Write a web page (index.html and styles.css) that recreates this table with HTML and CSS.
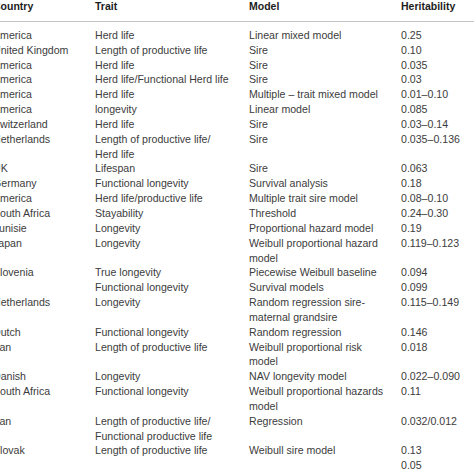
FILE: index.html
```html
<!DOCTYPE html>
<html>
<head>
<meta charset="utf-8">
<link rel="stylesheet" href="styles.css">
</head>
<body>
<table class="tbl">
  <colgroup>
    <col class="c-country"><col class="c-trait"><col class="c-model"><col class="c-her">
  </colgroup>
  <thead>
    <tr><th>Country</th><th>Trait</th><th>Model</th><th>Heritability</th></tr>
  </thead>
  <tbody>
    <tr class="first"><td>America</td><td>Herd life</td><td>Linear mixed model</td><td>0.25</td></tr>
    <tr><td>United Kingdom</td><td>Length of productive life</td><td>Sire</td><td>0.10</td></tr>
    <tr><td>America</td><td>Herd life</td><td>Sire</td><td>0.035</td></tr>
    <tr><td>America</td><td>Herd life/Functional Herd life</td><td>Sire</td><td>0.03</td></tr>
    <tr><td>America</td><td>Herd life</td><td>Multiple – trait mixed model</td><td>0.01–0.10</td></tr>
    <tr><td>America</td><td>longevity</td><td>Linear model</td><td>0.085</td></tr>
    <tr><td>Switzerland</td><td>Herd life</td><td>Sire</td><td>0.03–0.14</td></tr>
    <tr><td>Netherlands</td><td>Length of productive life/<br>Herd life</td><td>Sire</td><td>0.035–0.136</td></tr>
    <tr><td>UK</td><td>Lifespan</td><td>Sire</td><td>0.063</td></tr>
    <tr><td>Germany</td><td>Functional longevity</td><td>Survival analysis</td><td>0.18</td></tr>
    <tr><td>America</td><td>Herd life/productive life</td><td>Multiple trait sire model</td><td>0.08–0.10</td></tr>
    <tr><td>South Africa</td><td>Stayability</td><td>Threshold</td><td>0.24–0.30</td></tr>
    <tr><td>Tunisie</td><td>Longevity</td><td>Proportional hazard model</td><td>0.19</td></tr>
    <tr><td>Japan</td><td>Longevity</td><td>Weibull proportional hazard<br>model</td><td>0.119–0.123</td></tr>
    <tr><td>Slovenia</td><td>True longevity</td><td>Piecewise Weibull baseline</td><td>0.094</td></tr>
    <tr><td></td><td>Functional longevity</td><td>Survival models</td><td>0.099</td></tr>
    <tr><td>Netherlands</td><td>Longevity</td><td>Random regression sire-<br>maternal grandsire</td><td>0.115–0.149</td></tr>
    <tr><td>Dutch</td><td>Functional longevity</td><td>Random regression</td><td>0.146</td></tr>
    <tr><td>Iran</td><td>Length of productive life</td><td>Weibull proportional risk<br>model</td><td>0.018</td></tr>
    <tr><td>Danish</td><td>Longevity</td><td>NAV longevity model</td><td>0.022–0.090</td></tr>
    <tr><td>South Africa</td><td>Functional longevity</td><td>Weibull proportional hazards<br>model</td><td>0.11</td></tr>
    <tr><td>Iran</td><td>Length of productive life/<br>Functional productive life</td><td>Regression</td><td>0.032/0.012</td></tr>
    <tr><td>Slovak</td><td>Length of productive life</td><td>Weibull sire model</td><td>0.13<br>0.05</td></tr>
  </tbody>
</table>
</body>
</html>
```

FILE: styles.css
```css
html, body {
  margin: 0;
  padding: 0;
  background: #ffffff;
  overflow: hidden;
}

.tbl {
  border-collapse: collapse;
  table-layout: fixed;
  width: 481px;
  margin: -1px 0 0 -7px;
  font-family: "Liberation Sans", Arial, sans-serif;
  font-size: 10.6px;
  line-height: 14.85px;
  color: #3c3c3c;
}

.c-country { width: 102px; }
.c-trait { width: 154px; }
.c-model { width: 152px; }
.c-her { width: 73px; }

.tbl th {
  text-align: left;
  font-weight: bold;
  font-size: 10.5px;
  color: #1c1c1c;
  padding: 0 0 7px 0;
  border-bottom: 1px solid #c4c4c4;
  white-space: nowrap;
}

.tbl td {
  padding: 0;
  vertical-align: top;
  white-space: nowrap;
}

.tbl tr.first td {
  padding-top: 6px;
}
```
